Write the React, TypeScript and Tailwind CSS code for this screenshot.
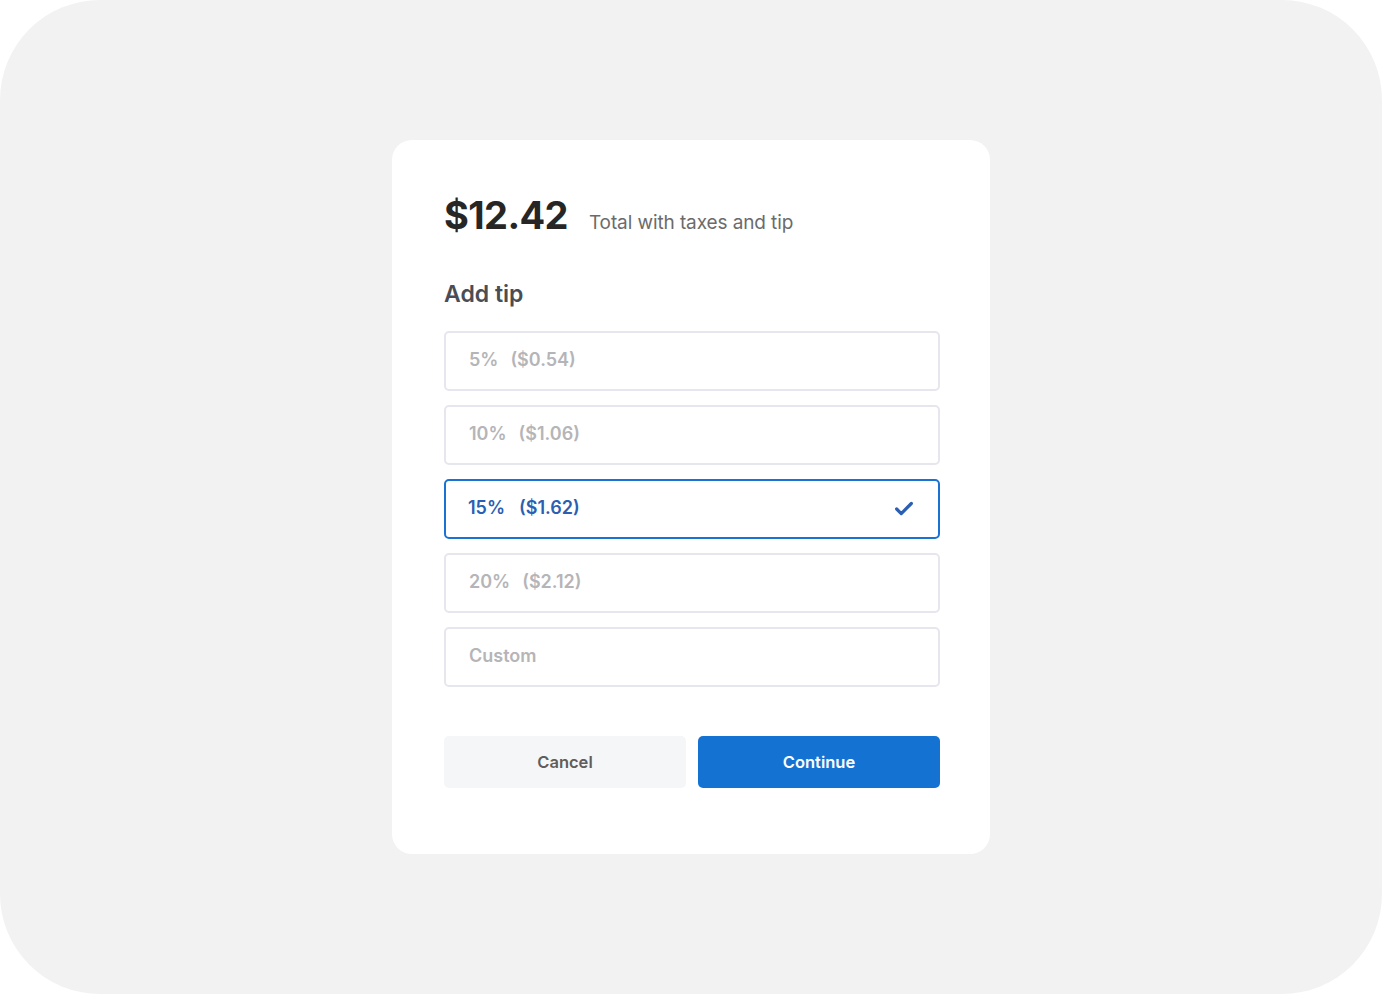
import { Check } from "lucide-react";

const tips = [
  { pct: "5%", amount: "($0.54)" },
  { pct: "10%", amount: "($1.06)" },
  { pct: "15%", amount: "($1.62)", selected: true },
  { pct: "20%", amount: "($2.12)" },
];

export default function App() {
  return (
    <div className="w-[1382px] h-[994px] bg-white" style={{ fontFamily: "Inter, 'Noto Sans', sans-serif" }}>
      <div className="w-full h-full rounded-[100px] bg-[#f2f2f2] flex items-start justify-center pt-[140px]">
        <div className="w-[598px] h-[714px] bg-white rounded-[20px] pl-[52px] pr-[50px] pt-[51px]">
          {/* Total */}
          <div className="flex items-baseline gap-[21px]">
            <span className="text-[38px] leading-[48px] font-bold text-[#262626] tracking-[-0.6px]">$12.42</span>
            <span className="text-[19px] text-[#6b6b6b] tracking-[-0.1px]">Total with taxes and tip</span>
          </div>

          <h2 className="mt-[40px] text-[23px] leading-[30px] font-semibold text-[#4a4d55]">Add tip</h2>

          {/* Options */}
          <div className="mt-[22px] flex flex-col gap-[14px]">
            {tips.map((t) => (
              <button
                key={t.pct}
                className={
                  t.selected
                    ? "h-[60px] rounded-[5px] border-2 border-[#1a73d4] flex items-center justify-between pl-[22px] pr-[23px] pb-[3px] text-[18px] font-semibold text-[#2a5fb3]"
                    : "h-[60px] rounded-[5px] border-2 border-[#e6e6ee] flex items-center pl-[23px] pr-[22px] pb-[3px] text-[18px] font-semibold text-[#b5b5b8]"
                }
              >
                <span className={t.selected ? "flex gap-[14px]" : "flex gap-[12px]"}>
                  <span>{t.pct}</span>
                  <span>{t.amount}</span>
                </span>
                {t.selected && <Check className="w-[22px] h-[22px] mt-[3px]" strokeWidth={3.5} />}
              </button>
            ))}
            <button className="h-[60px] rounded-[5px] border-2 border-[#e6e6ee] flex items-center pl-[23px] pb-[3px] text-[18px] font-semibold text-[#b5b5b8]">
              Custom
            </button>
          </div>

          {/* Actions */}
          <div className="mt-[49px] flex gap-[12px]">
            <button className="flex-1 h-[52px] rounded-[5px] bg-[#f5f6f8] text-[16.5px] font-semibold text-[#5e5e5e]">Cancel</button>
            <button className="flex-1 h-[52px] rounded-[5px] bg-[#1473d2] text-[16.5px] font-semibold text-white">Continue</button>
          </div>
        </div>
      </div>
    </div>
  );
}
